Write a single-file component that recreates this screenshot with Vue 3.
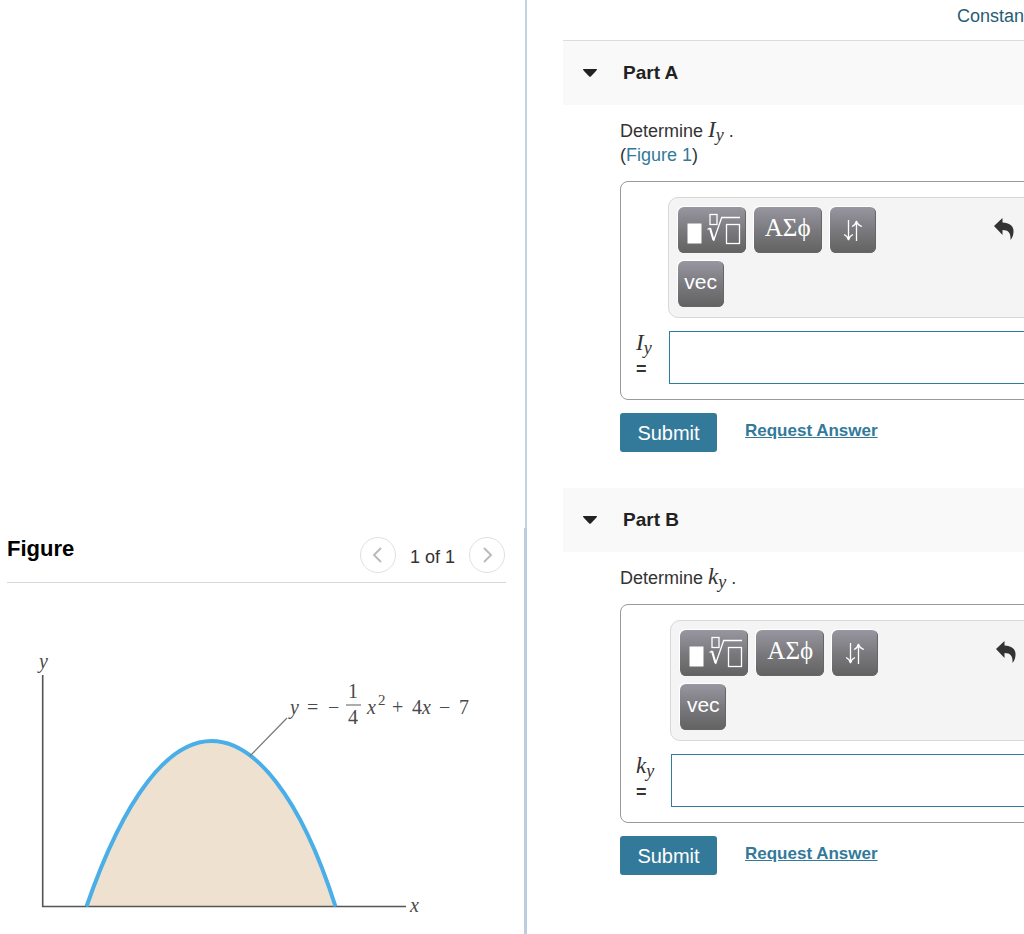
<script setup>
import { reactive } from 'vue'

const parts = reactive([
  { id: 'a', title: 'Part A', symbol: 'I', figure: true, answer: '' },
  { id: 'b', title: 'Part B', symbol: 'k', figure: false, answer: '' },
])
</script>

<template>
  <div class="page">
    <aside class="left">
      <div class="blank"></div>
      <section class="figure-pane">
        <header class="figure-head">
          <h2>Figure</h2>
          <nav class="pager" aria-label="Figures">
            <button type="button" class="round" aria-label="Previous figure">
              <svg width="12" height="18" viewBox="0 0 12 18"><path d="M9 2 2 9l7 7" /></svg>
            </button>
            <span>1 of 1</span>
            <button type="button" class="round" aria-label="Next figure">
              <svg width="12" height="18" viewBox="0 0 12 18"><path d="M3 2l7 7-7 7" /></svg>
            </button>
          </nav>
        </header>
        <svg class="plot" viewBox="0 0 499 351" role="img" aria-label="Area under a parabola">
          <path class="area" d="M79.500 323.500C118 212 162 158 204.500 158S293 212 328.500 323.500Z" />
          <path class="axis" d="M35.700 92V323.500H399" />
          <path class="curve" d="M79.500 323.500C118 212 162 158 204.500 158S293 212 328.500 323.500" />
          <path class="leader" d="M243 173L280 135" />
          <path class="leader" d="M339 122H354" />
          <g class="labels">
            <text x="32" y="85" class="it">y</text>
            <text x="403" y="329" class="it">x</text>
            <text x="283" y="131" class="it">y</text>
            <text x="300" y="131">=</text>
            <text x="321" y="131">−</text>
            <text x="341" y="115">1</text>
            <text x="341" y="141">4</text>
            <text x="360" y="131" class="it">x</text>
            <text x="371" y="122" class="sup">2</text>
            <text x="385" y="131">+</text>
            <text x="405" y="131">4<tspan class="it">x</tspan></text>
            <text x="432" y="131">−</text>
            <text x="452" y="131">7</text>
          </g>
        </svg>
      </section>
    </aside>

    <main class="right">
      <div class="topbar"><a href="#constants">Constan</a></div>

      <section v-for="part in parts" :key="part.id" class="part">
        <header class="part-head">
          <svg width="14" height="8" viewBox="0 0 14 8"><path d="M0 0H14Q14 1 13 2L8 7.300Q7 8.300 6 7.300L1 2Q0 1 0 0Z" fill="#222" /></svg>
          <h3>{{ part.title }}</h3>
        </header>
        <div class="part-body">
          <p>Determine <span class="math"><i>{{ part.symbol }}</i><sub>y</sub></span> .</p>
          <p v-if="part.figure">(<a href="#figure">Figure 1</a>)</p>

          <div class="answer-box">
            <div class="toolbar">
              <div class="palette">
                <button type="button" class="key wide" aria-label="Templates">
                  <svg width="68" height="46" viewBox="0 0 68 46">
                    <rect x="9.500" y="16.500" width="14" height="20" fill="#fff" />
                    <g fill="none" stroke="#fff" stroke-width="1.300">
                      <rect x="32" y="7.500" width="7" height="10" />
                      <path d="M29.500 22.500L32 21" />
                      <path d="M35.500 34L43.700 10.500H62" />
                      <path d="M32 21L35.500 33" stroke-width="2.200" />
                      <rect x="48.500" y="17.500" width="13" height="19" />
                    </g>
                  </svg>
                </button>
                <button type="button" class="key wide greek">ΑΣϕ</button>
                <button type="button" class="key" aria-label="Subscript and superscript arrows">
                  <svg width="46" height="46" viewBox="0 0 46 46" fill="none" stroke="#fff" stroke-width="1.300">
                    <path d="M18.500 13V32M14 27.500Q17.500 29 18.500 33Q19.500 29 23 27.500" />
                    <path d="M26.500 34V15M22 19.500Q25.500 18 26.500 14Q27.500 18 32 19.500" />
                  </svg>
                </button>
                <button type="button" class="key vec">vec</button>
              </div>
              <button type="button" class="undo" aria-label="Undo">
                <svg width="20" height="22" viewBox="0 0 20 22"><path d="M0 8L8.500 0V4.500C15 4.500 20 8 19.500 14C19.300 18 18 20 16.500 22C17 15 14.500 12 8.500 12V17Z" fill="#333" /></svg>
              </button>
            </div>
            <label :for="'answer-' + part.id">
              <span class="math"><i>{{ part.symbol }}</i><sub>y</sub></span>
              <span class="eq">=</span>
            </label>
            <input :id="'answer-' + part.id" v-model="part.answer" type="text" />
          </div>

          <div class="actions">
            <button type="button" class="submit">Submit</button>
            <a href="#request">Request Answer</a>
          </div>
        </div>
      </section>
    </main>
  </div>
</template>

<style>
body {
  background: #fff;
}
</style>

<style scoped>
.page {
  display: grid;
  grid-template-columns: 527px minmax(0, 1fr);
  min-height: 100vh;
  overflow: hidden;
  font-family: "Liberation Sans", Arial, sans-serif;
  font-size: 18px;
  line-height: 24px;
  color: #333;
}
h2,
h3,
p {
  margin: 0;
}
button {
  font: inherit;
  padding: 0;
  border: 0;
  background: none;
}
svg {
  display: block;
}
.left {
  display: flex;
  flex-direction: column;
}
.blank {
  flex: 1;
  border-right: 2px solid #c3d3e4;
}
.figure-pane {
  padding: 0 18px 0 7px;
  border-right: 3px solid #bccde0;
}
.figure-head {
  display: flex;
  justify-content: space-between;
  align-items: flex-start;
  padding: 9px 1px 9px 0;
  border-bottom: 1px solid #d8d8d8;
}
.figure-head h2 {
  font-size: 22px;
  color: #000;
}
.pager {
  display: flex;
  align-items: center;
  gap: 14px;
}
.pager span {
  padding-top: 4px;
}
.round {
  display: grid;
  place-items: center;
  width: 36px;
  height: 36px;
  border: 1px solid #e0e0e0;
  border-radius: 50%;
}
.round path {
  fill: none;
  stroke: #bbb;
  stroke-width: 2;
}
.plot {
  width: 100%;
}
.area {
  fill: #eee1cf;
}
.axis {
  fill: none;
  stroke: #555;
  stroke-width: 1.6;
}
.curve {
  fill: none;
  stroke: #4aaee8;
  stroke-width: 4;
}
.leader {
  stroke: #777;
  stroke-width: 1.2;
}
.labels {
  font-family: "Liberation Serif", serif;
  font-size: 20px;
  fill: #4a4a4a;
}
.it {
  font-style: italic;
}
.sup {
  font-size: 15px;
}
.right {
  padding-left: 36px;
  min-width: 0;
}
.topbar {
  height: 36px;
  padding: 4px 0 0 394px;
  border-bottom: 1px solid #dcdcdc;
  white-space: nowrap;
}
.topbar a {
  color: #265c75;
  text-decoration: none;
}
.part {
  padding-bottom: 36px;
}
.part-head {
  display: flex;
  align-items: center;
  gap: 26px;
  height: 64px;
  padding-left: 20px;
  background: #f9f9f9;
}
.part-head h3 {
  font-size: 19px;
  color: #222;
}
.part-body {
  margin-right: -60px;
  padding: 13px 0 0 57px;
}
.part-body p a {
  color: #337a9a;
  text-decoration: none;
}
.math {
  font-family: "Liberation Serif", serif;
  font-size: 23px;
  font-style: italic;
  line-height: 1;
}
.math sub {
  font-size: 18px;
  line-height: 0;
  vertical-align: -4px;
}
.answer-box {
  display: grid;
  grid-template-columns: auto 1fr;
  column-gap: 16px;
  row-gap: 13px;
  margin-top: 14px;
  padding: 15px;
  border: 1px solid #999;
  border-radius: 8px;
}
.toolbar {
  grid-column: 2;
  display: flex;
  align-items: flex-start;
  padding: 9px 9px 10px;
  border: 1px solid #d8d8d8;
  border-radius: 10px;
  background: #f4f4f4;
}
.palette {
  display: flex;
  flex-wrap: wrap;
  gap: 8px;
  width: 198px;
}
.key {
  width: 46px;
  height: 46px;
  border-radius: 6px;
  color: #fff;
  background: linear-gradient(#9896a0, #7a7a7e 50%, #626262);
  box-shadow: -1px -1px 0 #fff, inset -1px -1px 0 #666;
}
.wide {
  width: 68px;
}
.greek {
  padding-bottom: 4px;
  font-family: "Liberation Serif", serif;
  font-size: 25px;
}
.vec {
  padding-bottom: 4px;
  font-size: 21px;
}
.undo {
  margin: 11px 0 0 118px;
}
.answer-box label {
  display: flex;
  flex-direction: column;
}
.answer-box label .math {
  line-height: 24px;
}
.eq {
  font-weight: bold;
  line-height: 28px;
}
.answer-box input {
  height: 53px;
  box-sizing: border-box;
  min-width: 0;
  margin: 0 0 0 1px;
  padding: 0 8px;
  border: 1px solid #2f7c9f;
  font: inherit;
  background: #fff;
}
.actions {
  display: flex;
  gap: 28px;
  margin-top: 13px;
}
.submit {
  width: 97px;
  height: 39px;
  border-radius: 3px;
  background: #337a9a;
  color: #fff;
  font-size: 20px;
}
.actions a {
  padding-top: 6px;
  font-size: 17px;
  font-weight: bold;
  color: #337a9a;
}
</style>
